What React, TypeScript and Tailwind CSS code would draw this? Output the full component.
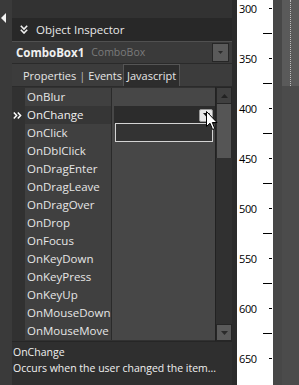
import React from "react";

const events = [
  "OnBlur",
  "OnChange",
  "OnClick",
  "OnDblClick",
  "OnDragEnter",
  "OnDragLeave",
  "OnDragOver",
  "OnDrop",
  "OnFocus",
  "OnKeyDown",
  "OnKeyPress",
  "OnKeyUp",
  "OnMouseDown",
  "OnMouseMove",
];

const rulerMarks = [300, 350, 400, 450, 500, 550, 600, 650];

export default function App() {
  return (
    <div
      className="w-[299px] h-[385px] flex overflow-hidden bg-[#313131] text-[#e6e6e6]"
      style={{ fontFamily: '"Open Sans", "Noto Sans", sans-serif' }}
    >
      {/* left strip */}
      <div className="w-[12px] h-full bg-[#3a3a3a] flex flex-col pt-[13px] pl-[1px]">
        <svg width="6" height="10" viewBox="0 0 6 10">
          <polygon points="5,0 5,10 0,5" fill="#f2f2f2" />
        </svg>
      </div>

      {/* panel */}
      <div className="w-[220px] h-full flex flex-col bg-[#313131] overflow-hidden">
        <div className="h-[18px] bg-[#323232]" />
        {/* header */}
        <div className="h-[23px] bg-[#282828] flex items-center pl-[8px] gap-[8px]">
          <svg width="8" height="9" viewBox="0 0 8 9">
            <polyline points="0.8,0.8 4,4 7.2,0.8" fill="none" stroke="#f0f0f0" strokeWidth="1.6" />
            <polyline points="0.8,4.8 4,8 7.2,4.8" fill="none" stroke="#f0f0f0" strokeWidth="1.6" />
          </svg>
          <span className="text-[11.5px] leading-none text-[#e8e8e8]">Object Inspector</span>
        </div>
        {/* combo row */}
        <div className="h-[23px] bg-[#3a3a3a] border-t border-[#505050] border-b border-b-[#2a2a2a] flex items-center pl-[4px] pr-[3px]">
          <span className="text-[11.5px] font-bold text-[#f0f0f0] leading-none">ComboBox1</span>
          <span className="text-[10.5px] text-[#7a7a7a] leading-none ml-[7px]">ComboBox</span>
          <div className="ml-auto w-[17px] h-[19px] bg-[#5a5a5a] border border-[#262626] flex items-center justify-center">
            <svg width="5" height="3" viewBox="0 0 5 3">
              <polygon points="0,0 5,0 2.5,3" fill="#2a2a2a" />
            </svg>
          </div>
        </div>
        {/* tabs row */}
        <div className="h-[23px] bg-[#3c3c3c] flex items-end pl-[11px] border-b border-[#2b2b2b]">
          <div className="h-[22px] flex items-center text-[11px] leading-none text-[#e6e6e6]">
            <span>Properties</span>
            <span className="mx-[3px] text-[#bdbdbd]">|</span>
            <span>Events</span>
          </div>
          <div className="ml-[1px] h-[22px] px-[3px] flex items-center bg-[#2d2d2d] border-t border-l border-r border-[#555555] text-[11px] leading-none text-[#e6e6e6]">
            Javascript
          </div>
        </div>
        {/* grid */}
        <div className="flex h-[254px] bg-[#313131]">
          <div className="w-[13px] flex flex-col pt-[1px]">
            {events.map((e, i) => (
              <div key={e} className="h-[18px] flex items-center pl-[1px]">
                {i === 1 && (
                  <svg width="9" height="7" viewBox="0 0 9 7">
                    <polyline points="0.8,0.6 3.6,3.5 0.8,6.4" fill="none" stroke="#ffffff" strokeWidth="1.5" />
                    <polyline points="4.8,0.6 7.6,3.5 4.8,6.4" fill="none" stroke="#ffffff" strokeWidth="1.5" />
                  </svg>
                )}
              </div>
            ))}
          </div>
          <div className="relative flex-1 flex flex-col pt-[1px]">
            {events.map((e, i) => (
              <div key={e} className="h-[18px] flex">
                <div
                  className={
                    i === 1
                      ? "w-[87px] h-full bg-[#363636] flex items-center pl-[2px] text-[11.5px] leading-none text-[#f0f0f0] border-r border-[#2a2a2a] whitespace-nowrap overflow-hidden"
                      : "w-[87px] h-full bg-[#404040] flex items-center pl-[2px] text-[11.5px] leading-none text-[#e6e6e6] border-r border-[#2a2a2a] whitespace-nowrap overflow-hidden"
                  }
                >
                  {e}
                </div>
                <div
                  className={
                    i === 1
                      ? "flex-1 h-full bg-[#474747] pl-[2px] flex items-center"
                      : "flex-1 h-full bg-[#474747]"
                  }
                >
                  {i === 1 && (
                    <div className="flex-1 h-full bg-[#2c2c2c] flex items-center justify-end pr-[2px]">
                      <div className="w-[14px] h-[13px] rounded-[2px] bg-[#e6e6e6] border border-[#9a9a9a] flex items-center justify-center">
                        <svg width="7" height="4" viewBox="0 0 7 4">
                          <polygon points="0,0 7,0 3.5,4" fill="#111111" />
                        </svg>
                      </div>
                    </div>
                  )}
                </div>
              </div>
            ))}
            {/* dropdown popup */}
            <div className="absolute left-[90px] top-[36px] w-[98px] h-[19px] bg-[#333333] border border-[#d4d4d4]" />
            {/* mouse cursor */}
            <svg
              className="absolute left-[181px] top-[24px]"
              width="13"
              height="20"
              viewBox="0 0 13 20"
            >
              <path
                d="M0.5,0.5 L0.5,15.5 L4,12.2 L6.6,18.5 L8.8,17.6 L6.3,11.5 L11,11.5 Z"
                fill="#ffffff"
                stroke="#000000"
                strokeWidth="1"
              />
            </svg>
          </div>
          {/* scrollbar */}
          <div className="w-[17px] flex flex-col bg-[#2e2e2e] border-l border-[#222222]">
            <div className="h-[17px] bg-[#404040] border border-[#262626] flex items-center justify-center">
              <svg width="7" height="4" viewBox="0 0 7 4">
                <polygon points="0,4 7,4 3.5,0" fill="#222222" />
              </svg>
            </div>
            <div className="h-[54px] bg-[#555555] border-l border-r border-[#2a2a2a]" />
            <div className="flex-1 bg-[#303030]" />
            <div className="h-[17px] bg-[#5a5a5a] border border-[#262626] flex items-center justify-center">
              <svg width="7" height="4" viewBox="0 0 7 4">
                <polygon points="0,0 7,0 3.5,4" fill="#2a2a2a" />
              </svg>
            </div>
          </div>
        </div>
        {/* description */}
        <div className="flex-1 bg-[#2f2f2f] border-t border-[#262626] pl-[1px] pt-[3px] flex flex-col gap-[1px] text-[10.5px] text-[#f0f0f0]">
          <div className="leading-[15px]">OnChange</div>
          <div className="leading-[15px] whitespace-nowrap">Occurs when the user changed the item...</div>
        </div>
      </div>

      {/* dark gap */}
      <div className="w-[5px] h-full bg-[#2b2b2b]" />

      {/* ruler */}
      <div className="w-[36px] h-full bg-white flex flex-col text-black overflow-hidden">
        {rulerMarks.map((n, i) => (
          <div
            key={n}
            className={
              i === 0
                ? "h-[50px] flex flex-col shrink-0 -mt-[29px]"
                : "h-[50px] flex flex-col shrink-0"
            }
          >
            <div className="h-[25px] flex items-center justify-end pr-[1px]">
              <div className="w-[9px] h-[1px] bg-black" />
            </div>
            <div className="h-[25px] flex items-center pl-[2px] pr-[1px]">
              <span className="text-[11px] leading-none tracking-[-0.4px]">{n}</span>
              <div className="ml-auto w-[3px] h-[1px] bg-black" />
            </div>
          </div>
        ))}
      </div>

      {/* right canvas */}
      <div className="flex-1 h-full bg-[#4b4b4b] flex">
        <div className="w-[9px] h-full bg-[#474747]" />
        <div className="flex-1 flex flex-col">
          <div className="h-[86px] bg-[#5a5a5a] flex">
            <div className="w-[8px]" />
            <div className="w-[1px] h-full border-l border-dotted border-[#bdbdbd]" />
          </div>
          <div className="flex-1 bg-[#4b4b4b]" />
        </div>
      </div>
    </div>
  );
}
